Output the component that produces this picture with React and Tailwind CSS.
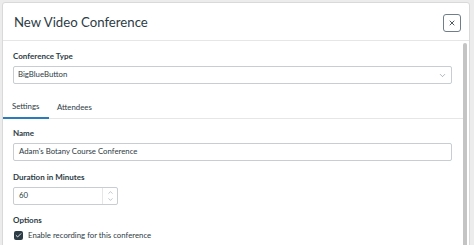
import React from "react";
import { X, ChevronDown, ChevronUp, Check } from "lucide-react";

export default function App() {
  return (
    <div className="w-[474px] h-[245px] overflow-hidden bg-[#ececec] pt-[2px] pl-[2px] font-['Lato',sans-serif] text-[#2d3b45]">
      <div className="w-[468px] h-[260px] bg-white border border-[#d9d9d9] rounded-t-[3px] flex flex-col">
        <div className="h-[38px] shrink-0 flex items-center justify-between pl-[11px] pr-[8px] border-b border-[#e6e6e6]">
          <h1 className="text-[13.2px] font-normal leading-none mt-[2px]">New Video Conference</h1>
          <button className="w-[18px] h-[18px] rounded-[3px] border-[1.5px] border-[#6f7e8a] flex items-center justify-center mt-[2px]">
            <X size={8} strokeWidth={2.5} className="text-[#2d3b45]" />
          </button>
        </div>
        <div className="flex flex-1">
          <div className="flex-1 flex flex-col">
            <div className="px-[10px] pt-[10px]">
              <div className="text-[8px] leading-[10px] font-bold">Conference Type</div>
              <div className="mt-[5px] h-[18px] w-[439px] border border-[#c7cdd1] rounded-[2px] flex items-center justify-between pl-[4px] pr-[4px]">
                <span className="text-[7.8px]">BigBlueButton</span>
                <ChevronDown size={9} strokeWidth={1.5} className="text-[#73818c]" />
              </div>
            </div>
            <div className="mt-[13px] flex border-b border-[#e6e6e6] h-[22px] text-[7.8px]">
              <div className="w-[46px] pl-[9px] flex items-center border-b-2 border-[#2b7abc] -mb-px">Settings</div>
              <div className="pl-[8px] flex items-center">Attendees</div>
            </div>
            <div className="px-[10px] pt-[9px]">
              <div className="text-[8px] leading-[10px] font-bold">Name</div>
              <div className="mt-[5px] h-[18px] w-[439px] border border-[#c7cdd1] rounded-[2px] flex items-center px-[5px]">
                <span className="text-[7.8px]">Adam's Botany Course Conference</span>
              </div>
              <div className="mt-[11px] text-[8px] leading-[10px] font-bold">Duration in Minutes</div>
              <div className="mt-[5px] h-[18px] w-[105px] border border-[#c7cdd1] rounded-[2px] flex items-center justify-between pl-[5px]">
                <span className="text-[7.8px]">60</span>
                <div className="w-[15px] h-full border-l border-[#e6e6e6] flex flex-col items-center justify-center">
                  <ChevronUp size={7} strokeWidth={1.5} className="text-[#73818c]" />
                  <ChevronDown size={7} strokeWidth={1.5} className="text-[#73818c]" />
                </div>
              </div>
              <div className="mt-[10px] text-[8px] leading-[10px] font-bold">Options</div>
              <div className="mt-[5px] flex items-center gap-[5px] pl-[1px]">
                <div className="w-[9px] h-[9px] rounded-[2px] bg-[#2d3b45] flex items-center justify-center">
                  <Check size={7} strokeWidth={3} className="text-white" />
                </div>
                <span className="text-[7.8px] leading-[10px]">Enable recording for this conference</span>
              </div>
            </div>
          </div>
          <div className="w-[6px] pt-[2px] pr-[2px]">
            <div className="w-[4px] h-full bg-[#c4c4c4] rounded-[2px]" />
          </div>
        </div>
      </div>
    </div>
  );
}
